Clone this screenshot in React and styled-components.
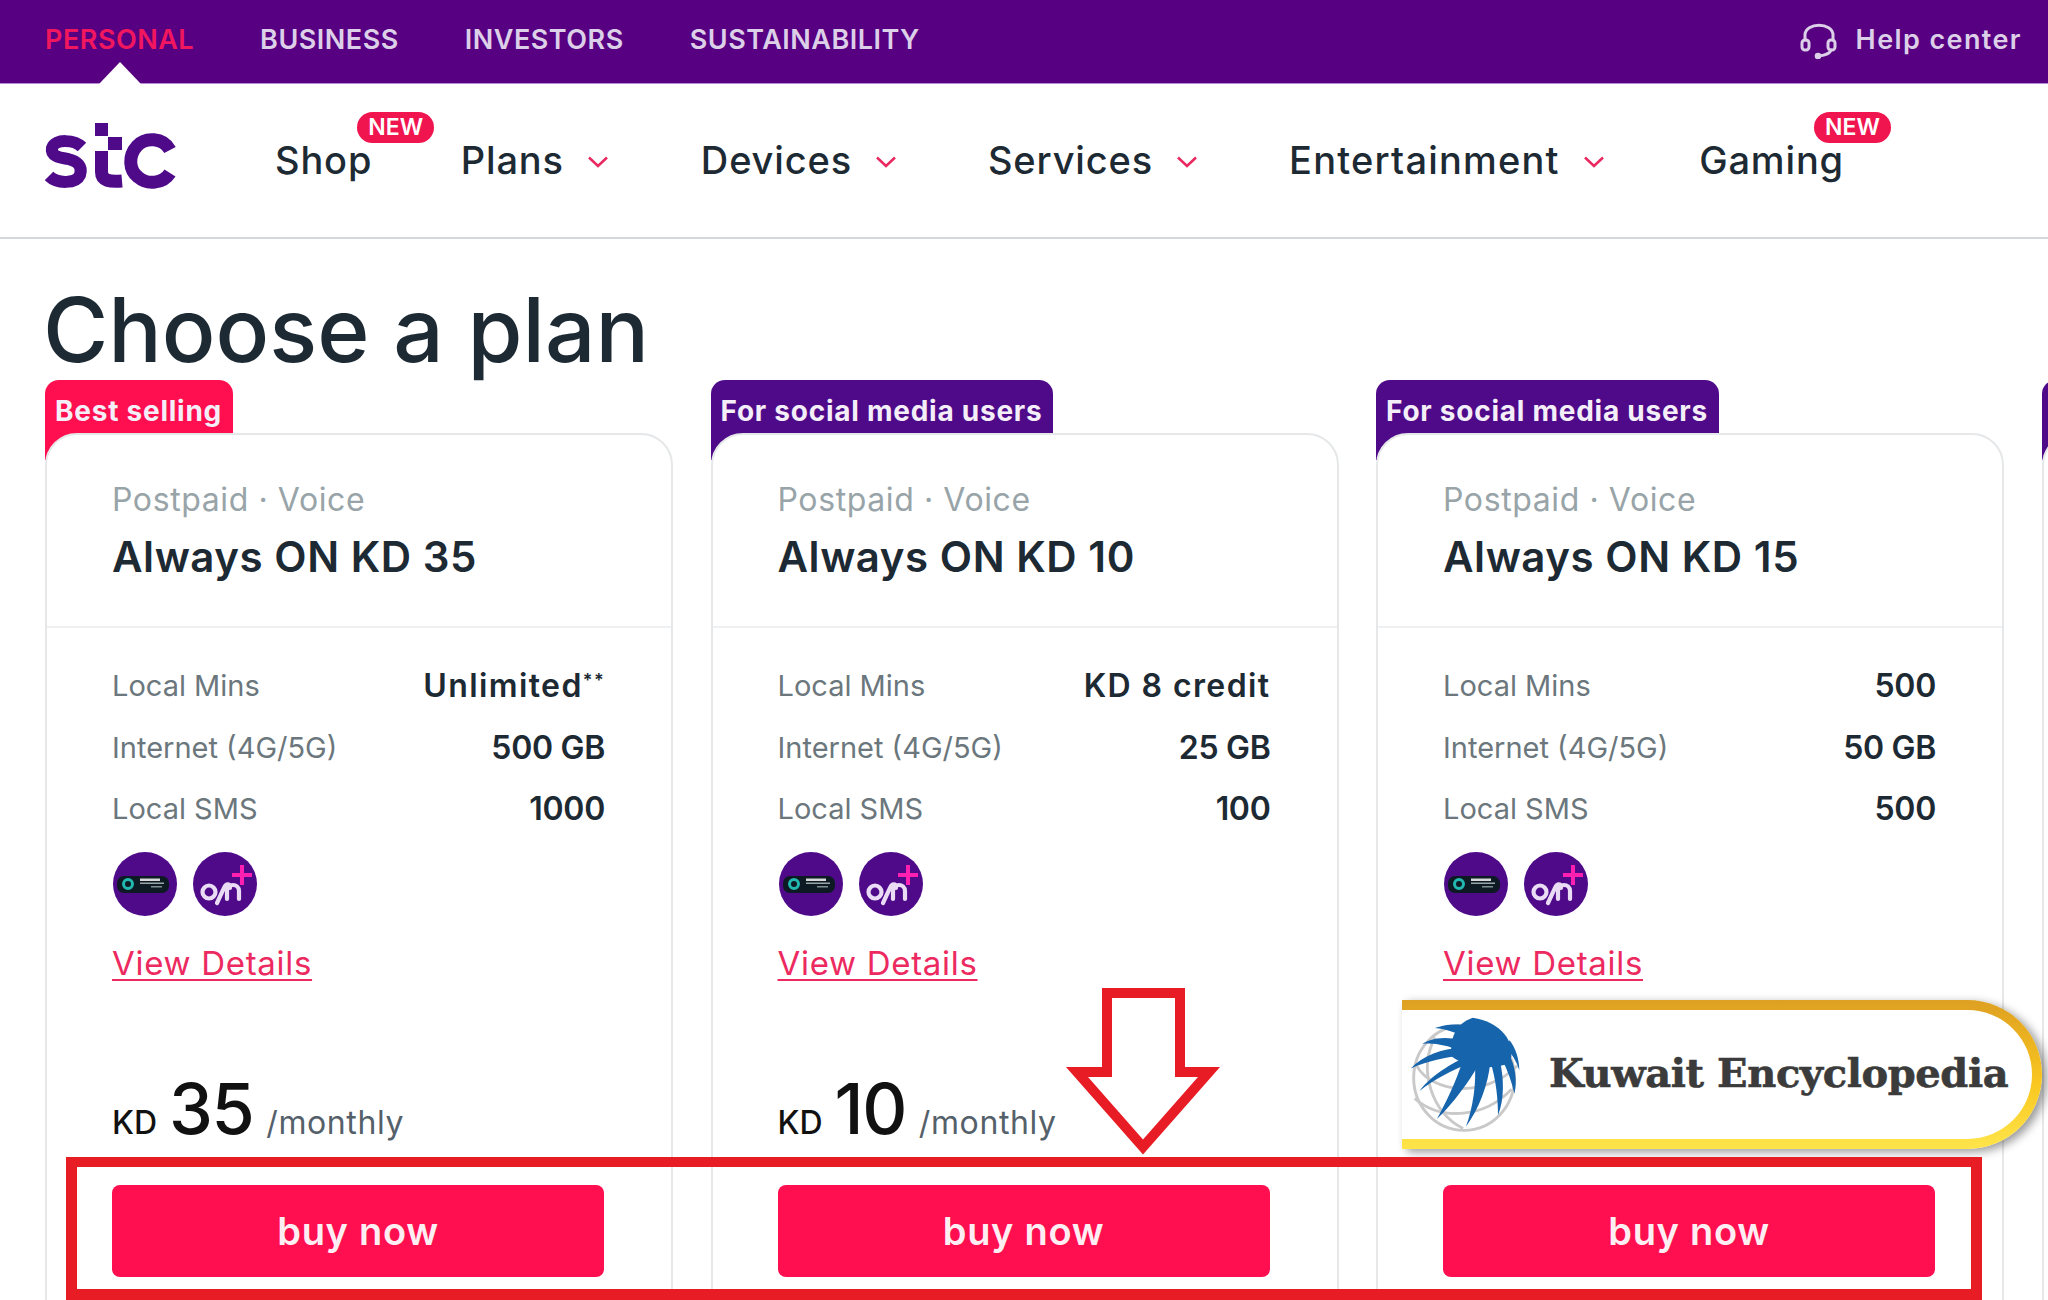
import React from 'react';
import styled, { createGlobalStyle } from 'styled-components';

const Global = createGlobalStyle`
  html, body { margin: 0; padding: 0; background: #fff; }
  * { box-sizing: border-box; }
`;
const Page = styled.div`
  position: relative; width: 2048px; height: 1300px; overflow: hidden;
  background: #fff; font-family: Inter, "Liberation Sans", sans-serif; color: #1d252d;
`;
const TopBar = styled.header`
  height: 84px; background: #570082; border-bottom: 1px solid #b98ad6;
  display: flex; align-items: center; justify-content: space-between;
  padding: 0 26px 4px 45px;
`;
const TopLinks = styled.nav`display: flex; gap: 66px;`;
const TopLink = styled.a`
  position: relative; font-size: 27px; font-weight: 600; letter-spacing: 0.5px; line-height: 32px;
  color: ${p => (p.$active ? '#f0175f' : '#dccfe8')};
  ${p => p.$active && `
    &::after {
      content: ''; position: absolute; left: 50%; margin-left: -21px; top: 38px;
      border-left: 21px solid transparent; border-right: 21px solid transparent;
      border-bottom: 22px solid #fff;
    }
  `}
`;
const Help = styled.a`
  display: flex; align-items: center; gap: 17px; color: #dccfe8;
  font-size: 27px; font-weight: 600; letter-spacing: 1.4px;
`;
const MainNav = styled.nav`
  height: 155px; border-bottom: 2px solid #d5d8da;
  display: flex; align-items: center; padding: 0 0 0 44px;
`;
const LogoSvg = styled.svg`width: 160px; height: 90px; margin: -12px 0 0 -9px; flex: none;`;
const NavItems = styled.div`display: flex; align-items: center; margin: -2px 0 0 80px;`;
const NavItem = styled.a`
  position: relative; display: flex; align-items: center; gap: 24px;
  font-size: 38px; font-weight: 500; line-height: 48px; letter-spacing: ${p => p.$ls ?? 0.85}px;
  margin-left: ${p => p.$ml}px; color: #1d2a33;
`;
const Chevron = styled.svg`width: 20px; height: 12px; flex: none; margin-top: 4px;`;
const NewBadge = styled.span`
  position: absolute; top: -24px; right: ${p => p.$right}px; width: 77px; height: 31px; border-radius: 16px;
  background: #f0144f; color: #fff; font-size: 23px; font-weight: 600; line-height: 31px; text-align: center; letter-spacing: 0;
`;
const Main = styled.main`padding: 0 0 0 45px;`;
const Title = styled.h1`
  margin: 0 0 0 -2px; padding-top: 38px; height: 141px; font-size: 89px; font-weight: 500; line-height: 106px;
  color: #1d2a33;
`;
const Plans = styled.div`display: flex; gap: 37.5px; width: 2400px;`;
const Plan = styled.section`flex: none; width: 628px;`;
const Tab = styled.div`
  display: inline-block; vertical-align: top; height: 80px; margin-bottom: -27px; padding: 0 11px 0 10px;
  border-radius: 14px 14px 0 0; background: ${p => (p.$pink ? '#ff0f4f' : '#4f0a8a')};
  min-width: ${p => (p.$pink ? '0' : '262px')};
  color: #f4eef8; font-size: 28px; font-weight: 700; line-height: 62px; letter-spacing: 0.75px;
`;
const Card = styled.article`
  position: relative; height: 900px; background: #fff; border: 2px solid #e5e7e9; border-radius: 32px 32px 0 0;
`;
const CardHead = styled.div`
  height: 193px; padding: 45px 0 0 65px; border-bottom: 2px solid #eff0f1;
`;
const Kind = styled.div`font-size: 32px; line-height: 40px; color: #98a4a8; letter-spacing: 0.6px;`;
const PlanName = styled.h2`margin: 11px 0 0; font-size: 42px; font-weight: 600; line-height: 52px; letter-spacing: 0.55px; color: #1d2a33;`;
const CardBody = styled.div`padding: 27px 66px 0 65px;`;
const Row = styled.div`
  display: flex; justify-content: space-between; align-items: center; height: 61.5px;
`;
const RowLabel = styled.span`font-size: 29px; color: #6b777c;`;
const RowValue = styled.span`
  font-size: 32px; font-weight: 600; color: #1d2a33;
  letter-spacing: ${p => (p.$wide ? '1.4px' : '-0.3px')};
`;
const Sup = styled.sup`font-size: 18px; line-height: 0; vertical-align: 10px;`;
const Perks = styled.div`display: flex; gap: 16px; margin: 12px 0 0 1px;`;
const PerkSvg = styled.svg`width: 64px; height: 64px; display: block;`;
const Details = styled.a`
  display: block; margin-top: 27px; font-size: 33px; line-height: 40px; color: #ec2a5f; letter-spacing: 0.7px;
  text-decoration: underline; text-underline-offset: 4px; text-decoration-thickness: 2px;
`;
const Price = styled.div`display: flex; align-items: baseline; margin-top: 83px; height: 80px;`;
const Currency = styled.span`font-size: 32px; font-weight: 500; color: #111;`;
const Amount = styled.span`font-size: 70px; font-weight: 500; color: #111; margin: 0 13px 0 12px; letter-spacing: -1.5px;`;
const Period = styled.span`font-size: 32px; color: #55616a; letter-spacing: 0.6px;`;
const Buy = styled.button`
  display: block; width: 492px; height: 92px; margin-top: 39px; border: 0; border-radius: 8px;
  background: #ff0f4f; color: #fdeef3; font-family: inherit; font-size: 38px; font-weight: 600; letter-spacing: 0.7px;
`;
const Frame = styled.div`
  position: absolute; left: 66px; top: 1157px; width: 1916px; height: 143px;
  border: 11px solid #e81c24; border-top-width: 10px; pointer-events: none;
`;
const ArrowSvg = styled.svg`position: absolute; left: 1062px; top: 984px; width: 162px; height: 176px;`;
const Banner = styled.aside`
  position: absolute; left: 1402px; top: 1000px; width: 640px; height: 149px;
  padding: 10px 10px 10px 0; border-radius: 0 75px 75px 0;
  background: linear-gradient(180deg, #dea022 0%, #f9c61f 55%, #ffe54a 100%);
  box-shadow: 5px 3px 10px rgba(0, 0, 0, 0.4);
`;
const BannerInner = styled.div`
  height: 100%; background: #fff; border-radius: 0 65px 65px 0;
  display: flex; align-items: center; padding-left: 1px; gap: 20px;
`;
const GlobeSvg = styled.svg`width: 126px; height: 122px; flex: none;`;
const BannerText = styled.span`
  font-family: "DejaVu Serif", "Liberation Serif", serif; font-weight: 700; font-size: 40px; color: #3b3b3b;
  letter-spacing: -0.4px; margin-top: -4px; -webkit-text-stroke: 0.6px #3b3b3b;
`;

const plans = [
  { tab: 'Best selling', pink: true, name: 'Always ON KD 35', mins: 'Unlimited', wide: true, star: true, net: '500 GB', sms: '1000', amount: '35' },
  { tab: 'For social media users', name: 'Always ON KD 10', mins: 'KD 8 credit', wide: true, net: '25 GB', sms: '100', amount: '10' },
  { tab: 'For social media users', name: 'Always ON KD 15', mins: '500', net: '50 GB', sms: '500' },
];

const Logo = () => (
  <LogoSvg viewBox="0 0 160 90" fill="none" stroke="#4f0a8a" strokeWidth="12">
    <path d="M47 37 C40 30 20 28 17 38 C15 48 30 48 33 49 C42 51 48 56 45 65 C41 74 22 74 14 66" />
    <path d="M66.500 41 V62 C66.500 71 75 72 87 71" strokeWidth="13" />
    <rect x="60" y="13" width="13" height="13" fill="#4f0a8a" stroke="none" />
    <rect x="73" y="27" width="14" height="13" fill="#4f0a8a" stroke="none" />
    <path d="M135 40 C128 27 110 27 102 36 C93 46 94 60 103 67 C112 75 128 74 135 63" strokeWidth="13" />
  </LogoSvg>
);
const Headset = () => (
  <svg width="40" height="38" viewBox="0 0 40 38" fill="none" stroke="#dccfe8" strokeWidth="3" strokeLinecap="round">
    <path d="M6 19 V14 C6 1 34 1 34 14 V19" />
    <rect x="3" y="19" width="7" height="10" rx="3" />
    <rect x="29" y="19" width="7" height="10" rx="3" />
    <path d="M32 29 C31 33 26 34 20 35" />
    <circle cx="19" cy="35" r="1.800" fill="#dccfe8" />
  </svg>
);
const Chev = () => (
  <Chevron viewBox="0 0 20 12" fill="none" stroke="#e8285f" strokeWidth="2.500">
    <path d="M1 1.500 L10 10 L19 1.500" />
  </Chevron>
);
const Perk1 = () => (
  <PerkSvg viewBox="0 0 64 64">
    <circle cx="32" cy="32" r="32" fill="#4f0a8a" />
    <rect x="4" y="24" width="52" height="17" rx="7" fill="#0d1a24" />
    <circle cx="15" cy="32" r="4.500" fill="none" stroke="#22b8b0" strokeWidth="3" />
    <rect x="27" y="26.500" width="20" height="2.500" fill="#d8d8d8" />
    <rect x="27" y="30.500" width="24" height="1.500" fill="#9aa5a5" />
    <rect x="38" y="34" width="11" height="1.500" fill="#7f8f90" />
  </PerkSvg>
);
const Perk2 = () => (
  <PerkSvg viewBox="0 0 64 64">
    <circle cx="32" cy="32" r="32" fill="#4f0a8a" />
    <g fill="none" stroke="#eadcf4" strokeWidth="4.200" strokeLinecap="round">
      <circle cx="16" cy="40" r="6.500" />
      <path d="M24 51 L31 36 C33 31 37 31 37 36" />
      <path d="M34 47 V39 C34 31 46 31 46 39 V47" />
    </g>
    <path d="M49 13 V33 M39 23 H59" stroke="#ff1fb0" strokeWidth="4" />
  </PerkSvg>
);
const Globe = () => (
  <GlobeSvg viewBox="0 0 130 130" preserveAspectRatio="none">
    <g fill="none" stroke="#c9c9c9" strokeWidth="3">
      <ellipse cx="63" cy="68" rx="52" ry="56" />
      <path d="M12 90 C40 115 85 110 112 80" />
      <path d="M14 55 C30 85 85 90 118 55" />
      <path d="M33 25 C15 60 30 105 62 122" />
    </g>
    <g fill="#1664ac">
      <path d="M72 4 C100 8 118 30 110 52 C95 60 65 58 50 45 C48 25 55 10 72 4 Z" />
      <path d="M60 28 C40 22 25 28 20 32 C32 30 45 34 58 38 Z" />
      <path d="M66 12 C50 10 42 12 33 15 C45 16 55 20 66 26 Z" />
      <path d="M64 36 C40 36 20 45 8 58 C25 50 45 46 62 44 Z" />
      <path d="M64 46 C45 55 25 70 17 82 C32 70 50 60 70 52 Z" />
      <path d="M62 48 C55 72 44 95 35 112 C52 95 68 72 78 54 Z" />
      <path d="M74 50 C76 75 72 100 65 120 C78 102 88 75 90 52 Z" />
      <path d="M90 50 C96 70 98 90 98 108 C105 90 104 68 100 50 Z" />
      <path d="M102 48 C108 60 112 72 115 85 C118 72 116 56 110 44 Z" />
      <path d="M106 36 C112 42 117 50 120 60 C120 48 116 36 110 28 Z" />
    </g>
  </GlobeSvg>
);

export default function App() {
  return (
    <Page>
      <Global />
      <TopBar>
        <TopLinks>
          <TopLink $active>PERSONAL</TopLink>
          <TopLink>BUSINESS</TopLink>
          <TopLink>INVESTORS</TopLink>
          <TopLink>SUSTAINABILITY</TopLink>
        </TopLinks>
        <Help><Headset />Help center</Help>
      </TopBar>
      <MainNav>
        <Logo />
        <NavItems>
          <NavItem $ml={0}>Shop<NewBadge $right={-62}>NEW</NewBadge></NavItem>
          <NavItem $ml={88.5}>Plans<Chev /></NavItem>
          <NavItem $ml={93}>Devices<Chev /></NavItem>
          <NavItem $ml={92}>Services<Chev /></NavItem>
          <NavItem $ml={92} $ls={1.2}>Entertainment<Chev /></NavItem>
          <NavItem $ml={95.5}>Gaming<NewBadge $right={-47}>NEW</NewBadge></NavItem>
        </NavItems>
      </MainNav>
      <Main>
        <Title>Choose a plan</Title>
        <Plans>
          {plans.map((p, i) => (
            <Plan key={i}>
              <Tab $pink={p.pink}>{p.tab}</Tab>
              <Card>
                <CardHead>
                  <Kind>Postpaid · Voice</Kind>
                  <PlanName>{p.name}</PlanName>
                </CardHead>
                <CardBody>
                  <Row><RowLabel>Local Mins</RowLabel><RowValue $wide={p.wide}>{p.mins}{p.star && <Sup>**</Sup>}</RowValue></Row>
                  <Row><RowLabel>Internet (4G/5G)</RowLabel><RowValue>{p.net}</RowValue></Row>
                  <Row><RowLabel>Local SMS</RowLabel><RowValue>{p.sms}</RowValue></Row>
                  <Perks><Perk1 /><Perk2 /></Perks>
                  <Details>View Details</Details>
                  <Price>
                    {p.amount && <><Currency>KD</Currency><Amount>{p.amount}</Amount><Period>/monthly</Period></>}
                  </Price>
                  <Buy>buy now</Buy>
                </CardBody>
              </Card>
            </Plan>
          ))}
          <Plan>
            <Tab />
            <Card />
          </Plan>
        </Plans>
      </Main>
      <Banner>
        <BannerInner>
          <Globe />
          <BannerText>Kuwait Encyclopedia</BannerText>
        </BannerInner>
      </Banner>
      <ArrowSvg viewBox="0 0 162 176" fill="none" stroke="#e81c24" strokeWidth="10">
        <path d="M45 9 H118 V88 H147 L81 163 L15 88 H45 Z" />
      </ArrowSvg>
      <Frame />
    </Page>
  );
}
